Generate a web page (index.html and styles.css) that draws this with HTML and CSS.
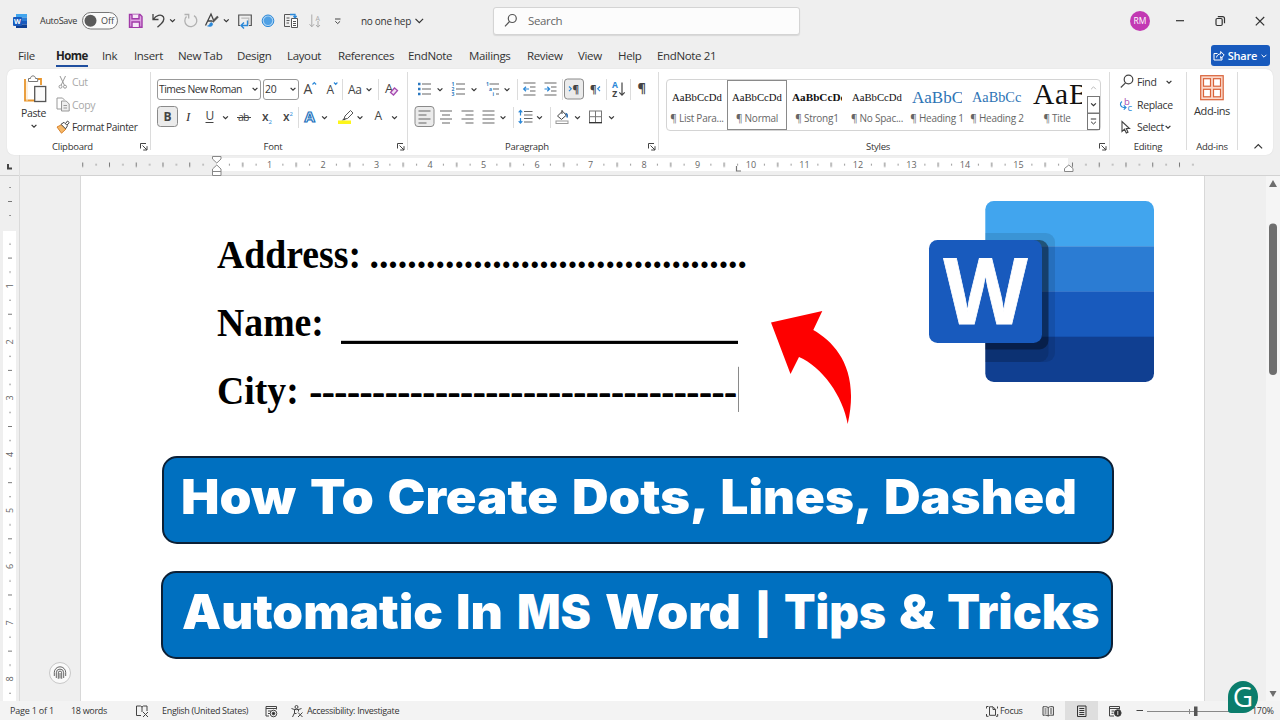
FILE: index.html
```html
<!DOCTYPE html>
<html lang="en">
<head>
<meta charset="utf-8">
<title>no one hep - Word</title>
<link rel="stylesheet" href="styles.css">
</head>
<body>
<svg class="defs" width="0" height="0">
  <defs>
    <path id="chev" d="M-2.4 -1.2L0 1.2L2.4 -1.2" fill="none" stroke="#333" stroke-width="1.2"/>
    <path id="launch" d="M0.5 5.5V0.5H6M2.5 2.5L7 7M7 3.2V7H3.2" fill="none" stroke="#444" stroke-width="1"/>
    <pattern id="ticks" x="216" width="53.5" height="22" patternUnits="userSpaceOnUse">
      <path d="M13.4 9.5v1.5M40.1 9.5v1.5" stroke="#777"/><path d="M26.7 8v4.5" stroke="#777"/>
    </pattern>
    <pattern id="ticksOut" x="214" width="26.75" height="22" patternUnits="userSpaceOnUse">
      <path d="M15.900 9.5v1.5" stroke="#777"/><path d="M2.500 8v4.5" stroke="#777"/>
    </pattern>
    <pattern id="vticks" y="230" width="20" height="56.15" patternUnits="userSpaceOnUse">
      <path d="M9.3 14h1.5M9.3 42.1h1.5M8 28.1h4" stroke="#777"/>
    </pattern>
  </defs>
</svg>

<div class="app">
  <header class="titlebar">
    <svg width="37" height="42" viewBox="0 0 37 42">
      <rect x="16" y="14" width="11" height="3.5" fill="#41a5ee"/><rect x="16" y="17.5" width="11" height="3.5" fill="#2b7cd3"/><rect x="16" y="21" width="11" height="3.5" fill="#185abd"/><rect x="16" y="24.5" width="11" height="3.5" fill="#103f91"/>
      <rect x="13" y="17" width="9" height="9" rx="1" fill="#185abd"/><text x="17.5" y="24.4" class="tiny-w">W</text>
    </svg>
    <span class="autosave">AutoSave</span>
    <svg width="42" height="42" viewBox="80 0 42 42">
      <rect x="82.500" y="12.500" width="35" height="16.500" rx="8.250" fill="#fbfbfb" stroke="#777"/><circle cx="90.500" cy="20.800" r="6" fill="#5b5b5b"/><text x="101" y="24.300" class="off">Off</text>
    </svg>
    <svg width="26" height="42" viewBox="122 0 26 42" fill="none" stroke="#a03aa8" stroke-width="1.400">
      <path d="M129.500 14.500h10.500l2 2v10.800h-12.500z" fill="#dfa5e3"/><path d="M132 14.500v4.300h7v-4.300M132 27v-5h7.500v5" fill="#f6e8f7"/>
    </svg>
    <svg width="32" height="42" viewBox="148 0 32 42" fill="none" stroke="#444" stroke-width="1.300">
      <path d="M153 14v5.500h5.500M153.300 19.300C156 15.500 161 13.500 163.500 17C165.500 21 161 24 157.500 27.300"/><use href="#chev" x="172.500" y="20.500"/>
    </svg>
    <svg width="22" height="42" viewBox="180 0 22 42" fill="none" stroke="#b0b0b0" stroke-width="1.300">
      <path d="M194 15.600A6 6 0 1 1 186.500 16.500M184.500 14.500h4.200v4"/>
    </svg>
    <svg width="30" height="42" viewBox="202 0 30 42" fill="none" stroke="#444" stroke-width="1.300">
      <path d="M205.500 25.500L211 14L213.500 20M208 21h4"/><path d="M218 16.500L212.500 22" stroke="#555" stroke-width="2.200"/><path d="M211.500 22.500c-2 0-1.500 3-4 3.500c2.500 1 5 .5 5.300-2z" fill="#2b88d8" stroke="#2b88d8" stroke-width=".6"/><use href="#chev" x="226.300" y="20.500"/>
    </svg>
    <svg width="26" height="42" viewBox="232 0 26 42" fill="none" stroke="#555" stroke-width="1.200">
      <path d="M240 25.500h-1.300V15h12.600v10.500h-2.500"/><path d="M241.300 18.200h7.500v6" stroke="#bbb"/><path d="M247.500 20.500v5h-6M244 22.500l-3 3l3 3" stroke="#2b88d8" stroke-width="1.400"/>
    </svg>
    <svg width="22" height="42" viewBox="258 0 22 42"><circle cx="268" cy="20.800" r="5.800" fill="#a9d1f3" stroke="#2b88d8"/><circle cx="268" cy="20.800" r="4.200" fill="#4fa0e4"/></svg>
    <svg width="24" height="42" viewBox="280 0 24 42" fill="none" stroke="#555">
      <path d="M290 26.500h-5.500v-12h6M286.500 18h3M286.500 20.500h3M286.500 23h2.500"/><path d="M291.500 18.500h6v9h-6zM293 21.500h3M293 23.500h3M293 25.500h3" fill="#fff"/><path d="M290 14.500h5v3M293.500 16l1.500 1.800l1.700-1.800" stroke="#2b88d8" stroke-width="1.300"/>
    </svg>
    <svg width="24" height="42" viewBox="304 0 24 42" fill="none" stroke="#aaa">
      <path d="M311.800 14.500v12M309.500 24.200l2.300 2.600l2.300-2.600"/><text x="315.500" y="20.500" class="sort-muted">A</text><path d="M318 21v6M316 25l2 2.200l2-2.200"/>
    </svg>
    <svg width="29" height="42" viewBox="328 0 29 42" fill="none" stroke="#444"><path d="M335 19h5.500M335.300 21.300l2.400 2.300l2.400-2.300"/></svg>
    <div class="docname"><span>no one hep</span><svg width="12" height="10" viewBox="413 16 12 10"><path d="M415.500 18.800l3.800 3.800l3.800-3.800" fill="none" stroke="#333" stroke-width="1.200"/></svg></div>
    <div class="search"><svg width="34" height="26" viewBox="494 8 34 26" fill="none" stroke="#555" stroke-width="1.200"><circle cx="512.300" cy="18.500" r="4"/><path d="M509.500 21.500l-4.500 4.800"/></svg><span>Search</span></div>
    <div class="avatar">RM</div>
    <svg width="130" height="42" viewBox="1150 0 130 42" fill="none" stroke="#333" stroke-width="1.200">
      <path d="M1176 20.700h8"/><rect x="1216" y="18.500" width="6.200" height="7" rx="1.200"/><path d="M1217.800 16.600h4.700q2 0 2 2v4.700"/><path d="M1255.800 17l8.400 8.400M1264.200 17l-8.400 8.400"/>
    </svg>
  </header>

  <div class="tabrow">
    <nav class="tabs"><a>File</a><a class="active">Home</a><a>Ink</a><a>Insert</a><a>New Tab</a><a>Design</a><a>Layout</a><a>References</a><a>EndNote</a><a>Mailings</a><a>Review</a><a>View</a><a>Help</a><a>EndNote 21</a></nav>
    <button class="share"><svg width="12" height="14" viewBox="1213 49 12 14" fill="none" stroke="#fff"><path d="M1217.500 53.500h-3.500v6.500h8v-3M1216.500 57.500c.5-2.500 2-3.500 4.200-3.500v-2.500l3.500 3.600l-3.500 3.400v-2.300"/></svg><span>Share</span><svg width="8" height="8" viewBox="-4 -4 8 8"><path d="M-2.400 -1.200L0 1.200L2.400 -1.200" fill="none" stroke="#fff"/></svg></button>
  </div>

  <section class="ribbon">
    <div class="group g-clip">
      <div class="body">
        <div class="paste">
          <svg width="30" height="34" viewBox="20 72 30 34" fill="none"><path d="M26 79v21.500h9.500M42 85v-6h-3" stroke="#e8952c" stroke-width="1.800"/><path d="M28 101v-20" stroke="#fbe1bf"/><path d="M29.500 81.500v-3h2c0-3.500 5-3.500 5 0h2.200v3z" stroke="#777" fill="#fff"/><rect x="35.700" y="86.500" width="11" height="15" stroke="#555" stroke-width="1.300" fill="#fbfbfb"/></svg>
          <span>Paste</span>
          <svg width="8" height="8" viewBox="-4 -4 8 8"><use href="#chev"/></svg>
        </div>
        <div class="stack">
          <div class="cmd muted"><svg width="17" height="20" viewBox="55 72 17 20" fill="none" stroke="#999"><path d="M60 76l4.300 9M65.500 76l-4.300 9"/><circle cx="60.500" cy="86.700" r="1.500"/><circle cx="65" cy="86.700" r="1.500"/></svg><span>Cut</span></div>
          <div class="cmd muted"><svg width="17" height="20" viewBox="55 94.500 17 20" fill="none" stroke="#999"><path d="M61 108.500h-4v-11h5.500l2 2"/><path d="M61.500 100.500h4.700l3 3v7h-7.700zM63.500 105h3.500M63.500 107.500h3.500" fill="#eee"/></svg><span>Copy</span></div>
          <div class="cmd"><svg width="17" height="20" viewBox="55 117 17 20" fill="none"><path d="M57 127l5-2.500l4 4.500l-4.500 4.200z" fill="#f5b868" stroke="#d9822b"/><path d="M61 124.300l3-2l3.500 3.500l-2 3zM65.500 123.500l2-2.500l1.700 1.500l-2 2.500" fill="#fff" stroke="#444"/></svg><span class="fp">Format Painter</span></div>
        </div>
      </div>
      <footer><span>Clipboard</span><svg width="12" height="10" viewBox="0 -1 12 10"><use href="#launch" x="2"/></svg></footer>
    </div>

    <div class="group g-font">
      <div class="body rows">
        <div class="row">
          <div class="combo face"><span>Times New Roman</span><svg width="8" height="8" viewBox="-4 -4 8 8"><use href="#chev"/></svg></div>
          <div class="combo size"><span>20</span><svg width="8" height="8" viewBox="-4 -4 8 8"><use href="#chev"/></svg></div>
          <svg width="22" height="22" viewBox="300 78 22 22"><text x="303.500" y="93.500" class="g14">A</text><path d="M312.500 84.500l1.800-1.800l1.800 1.800" fill="none" stroke="#2b88d8" stroke-width="1.200"/></svg>
          <svg width="20" height="22" viewBox="322 78 20 22"><text x="326.500" y="93.500" class="g12">A</text><path d="M334 82.500l1.700 1.800l1.700-1.800" fill="none" stroke="#2b88d8" stroke-width="1.200"/></svg>
          <i class="sep"></i>
          <svg width="35" height="22" viewBox="343 78 35 22"><text x="348" y="93.500" class="g12" textLength="14">Aa</text><use href="#chev" x="369" y="89.500"/></svg>
          <i class="sep"></i>
          <svg width="24" height="22" viewBox="379 78 24 22" fill="none"><text x="385" y="93" class="g13">A</text><path d="M390.500 92.500l4-4.500l3 2.500l-4 4.500z" stroke="#a64bb0" stroke-width="1.300" fill="#f3e2f5"/></svg>
        </div>
        <div class="row">
          <svg width="23" height="22" viewBox="156 106 23 22"><rect x="157.500" y="106.500" width="20" height="20" rx="3" fill="#ebebeb" stroke="#8a8a8a"/><text x="163.500" y="120.500" class="g12 b">B</text></svg>
          <svg width="20" height="22" viewBox="179 106 20 22"><text x="186" y="121" class="serif-i">I</text></svg>
          <svg width="35" height="22" viewBox="199 106 35 22"><text x="205.500" y="120" class="g12">U</text><path d="M205.500 122.500h8" stroke="#444"/><use href="#chev" x="225.500" y="117.500"/></svg>
          <svg width="22" height="22" viewBox="234 106 22 22"><text x="238" y="120.500" class="g10" textLength="11.500">ab</text><path d="M237 117.500h14" stroke="#444"/></svg>
          <svg width="22" height="22" viewBox="256 106 22 22"><text x="262" y="120.500" class="g12 sb">x</text><text x="268.500" y="123.500" class="sub">2</text></svg>
          <svg width="20" height="22" viewBox="278 106 20 22"><text x="283" y="120.500" class="g12 sb">x</text><text x="289.500" y="115.500" class="sub">2</text></svg>
          <i class="sep"></i>
          <svg width="33" height="22" viewBox="299 106 33 22"><text x="304.500" y="122" class="effect">A</text><use href="#chev" x="324.500" y="117.500"/></svg>
          <svg width="36" height="22" viewBox="332 106 36 22"><path d="M344 119l1-3l5.500-5.500l2.500 2.500l-5.500 5.500z" fill="#fff" stroke="#555"/><path d="M341.500 120.500l2.500-2l2 1.500z" fill="#444"/><rect x="338" y="120.500" width="13" height="3.500" fill="#fdf61a"/><use href="#chev" x="360" y="117.500"/></svg>
          <svg width="34" height="22" viewBox="368 106 34 22"><text x="374.500" y="120" class="g12">A</text><use href="#chev" x="394.500" y="117.500"/></svg>
        </div>
      </div>
      <footer><span>Font</span><svg width="12" height="10" viewBox="0 -1 12 10"><use href="#launch" x="2"/></svg></footer>
    </div>

    <div class="group g-para">
      <div class="body rows">
        <div class="row">
          <svg width="35" height="22" viewBox="413 78 35 22"><path d="M422 84h9M422 89h9M422 94h9" stroke="#666" stroke-width="1.200"/><path d="M418 82.700h2.500v2.500h-2.500zM418 87.700h2.500v2.500h-2.500zM418 92.700h2.500v2.500h-2.500z" fill="#2b78c0"/><use href="#chev" x="440" y="89.500"/></svg>
          <svg width="34" height="22" viewBox="448 78 34 22"><path d="M456 84h9M456 89h9M456 94h9" stroke="#666" stroke-width="1.200"/><text x="451.500" y="85.500" class="num">1</text><text x="451.500" y="90.800" class="num">2</text><text x="451.500" y="96" class="num">3</text><use href="#chev" x="474" y="89.500"/></svg>
          <svg width="35" height="22" viewBox="482 78 35 22"><path d="M489.500 84h9.500M493 89h6M496 94h3" stroke="#666" stroke-width="1.200"/><text x="486" y="85.500" class="num">1</text><text x="489" y="91" class="num">a</text><text x="492.500" y="96" class="num">i</text><use href="#chev" x="507" y="89.500"/></svg>
          <i class="sep"></i>
          <svg width="24" height="22" viewBox="518 78 24 22" fill="none" stroke="#666" stroke-width="1.200"><path d="M523.500 83h12M530 87h5.500M530 91h5.500M523.500 95h12"/><path d="M529 89h-5M526 86.800l-2.300 2.200l2.300 2.200" stroke="#2b88d8"/></svg>
          <svg width="20" height="22" viewBox="542 78 20 22" fill="none" stroke="#666" stroke-width="1.200"><path d="M544.500 83h12M551 87h5.500M551 91h5.500M544.500 95h12"/><path d="M544.500 89h5M547.300 86.800l2.300 2.200l-2.300 2.200" stroke="#2b88d8"/></svg>
          <i class="sep"></i>
          <svg width="22" height="22" viewBox="563 78 22 22"><rect x="564.500" y="79" width="19" height="20" rx="3" fill="#ebebeb" stroke="#8a8a8a"/><path d="M569 86.500l2.300 2.300l-2.300 2.300" fill="none" stroke="#2b88d8" stroke-width="1.200"/><text x="572.500" y="92.500" class="pil">¶</text></svg>
          <svg width="21" height="22" viewBox="585 78 21 22"><text x="590" y="92.500" class="pil">¶</text><path d="M600 86.500l-2.300 2.300l2.300 2.300" fill="none" stroke="#2b88d8" stroke-width="1.200"/></svg>
          <i class="sep"></i>
          <svg width="23" height="22" viewBox="607 78 23 22"><text x="612" y="88" class="az blue">A</text><text x="612.300" y="96.500" class="az">Z</text><path d="M622 82.500v12.500M619.300 92.300l2.700 2.900l2.700-2.900" fill="none" stroke="#444" stroke-width="1.200"/></svg>
          <i class="sep"></i>
          <svg width="22" height="22" viewBox="631 78 22 22"><text x="637.500" y="93.300" class="pil big">¶</text></svg>
        </div>
        <div class="row">
          <svg width="23" height="22" viewBox="413 106 23 22" fill="none" stroke="#666" stroke-width="1.200"><rect x="415" y="106.500" width="19" height="20" rx="3" fill="#ebebeb" stroke="#8a8a8a" stroke-width="1"/><path d="M418.500 111h12M418.500 115h8M418.500 119h12M418.500 123h8"/></svg>
          <svg width="21" height="22" viewBox="436 106 21 22" fill="none" stroke="#666" stroke-width="1.200"><path d="M440 111h12M442 115h8M440 119h12M442 123h8"/></svg>
          <svg width="22" height="22" viewBox="457 106 22 22" fill="none" stroke="#666" stroke-width="1.200"><path d="M461.500 111h12M465.500 115h8M461.500 119h12M465.500 123h8"/></svg>
          <svg width="34" height="22" viewBox="479 106 34 22" fill="none" stroke="#666" stroke-width="1.200"><path d="M482.500 111h12M482.500 115h12M482.500 119h12M482.500 123h12"/><use href="#chev" x="503" y="117.500"/></svg>
          <i class="sep"></i>
          <svg width="36" height="22" viewBox="514 106 36 22" fill="none" stroke="#666" stroke-width="1.200"><path d="M524 111.500h8.500M524 115h8.500M524 118.500h8.500M524 122h8.500"/><path d="M520.500 115.500v-5M518.700 112.300l1.800-2l1.800 2M520.500 118v5M518.700 121.200l1.800 2l1.800-2" stroke="#2b88d8"/><use href="#chev" x="539.500" y="117.500"/></svg>
          <i class="sep"></i>
          <svg width="34" height="22" viewBox="551 106 34 22" fill="none" stroke="#444"><path d="M557.500 116l5-4.800l3.800 4l-4.800 4.200zM562 110v4"/><path d="M565.500 113.500c1.500 0 2 1.500 1.500 4" stroke="#2b6cb0" stroke-width="1.600"/><rect x="556" y="121" width="12" height="2.500" stroke="#999"/><use href="#chev" x="577.500" y="117.500"/></svg>
          <svg width="34" height="22" viewBox="585 106 34 22" fill="none" stroke="#777"><rect x="589.500" y="111" width="12" height="11.500"/><path d="M595.500 111v11.500M589.500 116.700h12"/><path d="M589 122.700h13" stroke="#333" stroke-width="1.300"/><use href="#chev" x="611.500" y="117.500"/></svg>
        </div>
      </div>
      <footer><span>Paragraph</span><svg width="12" height="10" viewBox="0 -1 12 10"><use href="#launch" x="2"/></svg></footer>
    </div>

    <div class="group g-styles">
      <div class="body">
        <div class="gallery">
          <div class="style"><b class="pv">AaBbCcDd</b><span>¶ List Para...</span></div>
          <div class="style sel"><b class="pv">AaBbCcDd</b><span>¶ Normal</span></div>
          <div class="style"><b class="pv strong">AaBbCcDd</b><span>¶ Strong1</span></div>
          <div class="style"><b class="pv">AaBbCcDd</b><span>¶ No Spac...</span></div>
          <div class="style"><b class="pv h1">AaBbCc</b><span>¶ Heading 1</span></div>
          <div class="style"><b class="pv h2">AaBbCc</b><span>¶ Heading 2</span></div>
          <div class="style"><b class="pv title">AaB</b><span>¶ Title</span></div>
          <div class="scroller">
            <svg width="13" height="16" viewBox="-6.500 -8 13 16"><path d="M-2.400 1.200L0 -1.200L2.400 1.200" fill="none" stroke="#bbb"/></svg>
            <svg width="13" height="17" viewBox="-6.500 -8.500 13 17"><rect x="-6" y="-8" width="12" height="16.500" fill="#fff" stroke="#777"/><use href="#chev"/></svg>
            <svg width="13" height="17" viewBox="-6.500 -8.500 13 17"><rect x="-6" y="-8" width="12" height="16" fill="#fff" stroke="#777"/><path d="M-2.700 -2.500h5.400M-2.400 .3L0 2.500L2.400 .3" fill="none" stroke="#333"/></svg>
          </div>
        </div>
      </div>
      <footer><span>Styles</span><svg width="12" height="10" viewBox="0 -1 12 10"><use href="#launch" x="2"/></svg></footer>
    </div>

    <div class="group g-edit">
      <div class="body">
        <div class="stack">
          <div class="cmd"><svg width="20" height="20" viewBox="1117 72 20 20" fill="none" stroke="#444" stroke-width="1.200"><circle cx="1128.500" cy="79.500" r="4.300"/><path d="M1125.500 82.800l-4.700 4.700"/></svg><span>Find</span><svg class="find-ch" width="8" height="8" viewBox="-4 -4 8 8"><use href="#chev"/></svg></div>
          <div class="cmd"><svg width="20" height="20" viewBox="1117 94.500 20 20" fill="none"><text x="1124" y="104" class="rb">b</text><text x="1127.500" y="110.800" class="rc">c</text><path d="M1122 101c-2.500 1.500-2 5.500 1.500 6h2.500M1123.800 104.800l2.200 2.200l-2.200 2.200" stroke="#2b88d8" stroke-width="1.200"/></svg><span>Replace</span></div>
          <div class="cmd"><svg width="20" height="20" viewBox="1117 117 20 20" fill="none" stroke="#444" stroke-width="1.100"><path d="M1122 121.500v10l2.500-2.300l1.800 3.800l1.700-.8l-1.700-3.700h3.200z"/></svg><span>Select</span><svg width="8" height="8" viewBox="-4 -4 8 8"><use href="#chev"/></svg></div>
        </div>
      </div>
      <footer><span>Editing</span></footer>
    </div>

    <div class="group g-add">
      <div class="body addins">
        <svg width="26" height="27" viewBox="1199 74 26 27" fill="#fff" stroke="#d9633a" stroke-width="1.200"><rect x="1200.700" y="75.700" width="22.500" height="24" fill="#fbd9cb"/><rect x="1203.500" y="78.700" width="7" height="7.500"/><rect x="1213.500" y="78.700" width="7" height="7.500"/><rect x="1203.500" y="89.300" width="7" height="7.500"/><rect x="1213.500" y="89.300" width="7" height="7.500"/></svg>
        <span>Add-ins</span>
      </div>
      <footer><span>Add-ins</span></footer>
    </div>
    <div class="collapse"><svg width="12" height="10" viewBox="1252 141 12 10"><path d="M1254.500 148.300l3.800-3.800l3.800 3.800" fill="none" stroke="#333" stroke-width="1.200"/></svg></div>
  </section>

  <svg class="hruler" width="1280" height="21" viewBox="0 155 1280 21">
    <rect x="217" y="158" width="851" height="13" fill="#fff"/>
    <path d="M0 175.500h1280" stroke="#d2d2d2"/><path d="M19.500 155v21" stroke="#e0e0e0"/>
    <path d="M8 164v4.500h4" fill="none" stroke="#444" stroke-width="2"/>
    <g transform="translate(0 154.500)">
      <rect x="80" width="130" height="22" fill="url(#ticksOut)"/><rect x="220" width="842" height="22" fill="url(#ticks)"/><rect x="1071" width="126" height="22" fill="url(#ticksOut)"/>
    </g>
    <g class="rnum">
      <text x="269.500" y="168">1</text><text x="323" y="168">2</text><text x="376.500" y="168">3</text><text x="430" y="168">4</text><text x="483.500" y="168">5</text><text x="537" y="168">6</text><text x="590.500" y="168">7</text><text x="644" y="168">8</text><text x="697.500" y="168">9</text><text x="751" y="168">10</text><text x="804.500" y="168">11</text><text x="858" y="168">12</text><text x="911.500" y="168">13</text><text x="965" y="168">14</text><text x="1018.500" y="168">15</text>
    </g>
    <g fill="#fff" stroke="#888"><path d="M212.500 156.500h8.500v2.500l-4.200 4l-4.300-4z"/><path d="M212.500 175.500v-6.500l4.300-4l4.200 4v6.500zM212.500 171.500h8.500"/><path d="M1064.500 171.500v-3l4.300-3.500l4.200 3.500v3z"/></g>
    <path d="M736.500 166v5h4.500" fill="none" stroke="#777" stroke-width="1.200"/>
  </svg>

  <main class="workspace">
    <svg class="vruler" width="81" height="525" viewBox="0 176 81 525">
      <rect x="3" y="231" width="13" height="470" fill="#fff"/><path d="M19.500 176v525" stroke="#dadada"/><path d="M80.500 176v525" stroke="#d8d8d8"/>
      <path d="M9.300 187.500h1.500M8 201.500h4M9.300 215.500h1.500" stroke="#777"/>
      <rect y="232" width="20" height="469" fill="url(#vticks)"/>
      <g class="rnum"><text transform="translate(13 286) rotate(-90)">1</text><text transform="translate(13 342) rotate(-90)">2</text><text transform="translate(13 398) rotate(-90)">3</text><text transform="translate(13 454.500) rotate(-90)">4</text><text transform="translate(13 510.500) rotate(-90)">5</text><text transform="translate(13 566.500) rotate(-90)">6</text><text transform="translate(13 623) rotate(-90)">7</text><text transform="translate(13 679) rotate(-90)">8</text></g>
      <circle cx="60" cy="673" r="10.500" fill="#fafafa" stroke="#c8c8c8"/>
      <g fill="none" stroke="#555" stroke-width=".9"><path d="M54.300 676v-3.500a5.700 5.700 0 0 1 11.400 0v3.500M56.300 678v-5.200a3.700 3.700 0 0 1 7.400 0v5.200M58.300 678.800v-6a1.700 1.700 0 0 1 3.400 0v6M60 673v5.500"/></g>
    </svg>
    <article class="page">
      <div class="lines">
        <p class="line">Address: <span class="dots">........................................</span></p>
        <p class="line">Name: <span class="rule"></span></p>
        <p class="line">City: <span class="dashes">----------------------------------</span><i class="caret"></i></p>
      </div>
      <div class="banner one"><svg width="944" height="84" viewBox="0 0 944 84"><text y="56"><tspan x="17" textLength="115" lengthAdjust="spacingAndGlyphs">How</tspan> <tspan x="146" textLength="64" lengthAdjust="spacingAndGlyphs">To</tspan> <tspan x="223.500" textLength="170.500" lengthAdjust="spacingAndGlyphs">Create</tspan> <tspan x="408" textLength="134" lengthAdjust="spacingAndGlyphs">Dots,</tspan> <tspan x="556.500" textLength="149" lengthAdjust="spacingAndGlyphs">Lines,</tspan> <tspan x="720" textLength="193" lengthAdjust="spacingAndGlyphs">Dashed</tspan></text></svg></div>
      <div class="banner two"><svg width="944" height="84" viewBox="0 0 944 84"><text y="55.500"><tspan x="19" textLength="261" lengthAdjust="spacingAndGlyphs">Automatic</tspan> <tspan x="293" textLength="47" lengthAdjust="spacingAndGlyphs">In</tspan> <tspan x="354" textLength="74" lengthAdjust="spacingAndGlyphs">MS</tspan> <tspan x="442" textLength="136" lengthAdjust="spacingAndGlyphs">Word</tspan> <tspan x="591" textLength="18" lengthAdjust="spacingAndGlyphs" class="bar">|</tspan> <tspan x="621" textLength="102" lengthAdjust="spacingAndGlyphs">Tips</tspan> <tspan x="736" textLength="36" lengthAdjust="spacingAndGlyphs">&amp;</tspan> <tspan x="784" textLength="152.500" lengthAdjust="spacingAndGlyphs">Tricks</tspan></text></svg></div>
      <svg class="arrow" width="90" height="120" viewBox="765 308 90 120"><path d="M771 322.500L822.300 311L813.300 330C836 343 860 370 847.700 424C843 396 822 367 799 357L790.500 374z" fill="#fe0000"/></svg>
      <svg class="logo" width="230" height="186" viewBox="926 198 230 186">
        <defs><clipPath id="sheet"><rect x="985.300" y="201" width="168.700" height="181" rx="8.500"/></clipPath></defs>
        <g clip-path="url(#sheet)">
          <rect x="985" y="201" width="170" height="45.500" fill="#41a5ee"/><rect x="985" y="246.300" width="170" height="45.500" fill="#2b7cd3"/><rect x="985" y="291.500" width="170" height="45.500" fill="#185abd"/><rect x="985" y="336.700" width="170" height="46" fill="#103f91"/>
          <rect x="965" y="233" width="90" height="129" rx="9" opacity=".1"/><rect x="965" y="240" width="83.500" height="122" rx="9" opacity=".12"/><rect x="965" y="240" width="83.500" height="109.500" rx="9" opacity=".35"/>
        </g>
        <rect x="929" y="240" width="113" height="103" rx="8.500" fill="#185abd"/>
        <text x="943.500" y="324" class="logo-w" textLength="84" lengthAdjust="spacingAndGlyphs">W</text>
      </svg>
    </article>
    <div class="gutter"></div>
    <svg class="scroll" width="14" height="525" viewBox="1266 176 14 525"><rect x="1266" y="176" width="14" height="525" fill="#f5f5f5"/><path d="M1269 187l4-7l4 7zM1269.500 691h7l-3.500 6z" fill="#6e6e6e"/><rect x="1269" y="223.500" width="8" height="151.500" rx="4" fill="#6e6e6e"/></svg>
  </main>

  <footer class="status">
    <span class="s-page">Page 1 of 1</span><span class="s-words">18 words</span>
    <svg width="30" height="19" viewBox="132 701 30 19" fill="none" stroke="#444"><path d="M141 715.500h-4.500v-9.500h4l1.500 1l1.500-1h3.500v5M142 707v5M143 712l5 5M148 712l-5 5"/></svg>
    <span class="s-lang">English (United States)</span>
    <svg width="22" height="19" viewBox="262 701 22 19" fill="none" stroke="#444"><path d="M269 716h-3v-9.500h10.500v3M266 708.500h10.500M268 711h3M268 713.500h2"/><circle cx="273.500" cy="713.500" r="3.300"/><circle cx="273.500" cy="713.500" r="1.300" fill="#222"/></svg>
    <svg width="22" height="19" viewBox="285 701 22 19" fill="none" stroke="#444"><circle cx="297.500" cy="707" r="1.500"/><path d="M292.500 708.500c3 1.500 7 1.500 10 0M295.500 710v3l-2 4M299.500 710v1.500M299 712.500l4.500 4.500M303.500 712.500l-4.500 4.500M295.500 713.500l2 0"/></svg>
    <span class="s-acc">Accessibility: Investigate</span>
    <span class="fill"></span>
    <svg width="16" height="19" viewBox="984 701 16 19" fill="none" stroke="#444"><path d="M986.500 708.500v-2h2M986.500 714v2.300h2M996 716.300h1.700v-2.300M997.500 706.500v2M989.500 706.800h3.500l2.500 2.500v6h-6zM993 707v2.500h2.500"/></svg>
    <span class="s-focus">Focus</span>
    <svg width="31" height="19" viewBox="1034 701 31 19" fill="none" stroke="#444"><path d="M1048.200 707.500v8.500M1048.200 707.500c-1.500-1-3.500-1-5.200-.7v8.500c1.700-.3 3.700-.3 5.200.7c1.500-1 3.500-1 5.200-.7v-8.500c-1.700-.3-3.700-.3-5.200.7M1044.500 709h2M1044.500 711h2M1044.500 713h2M1050 709h2M1050 711h2M1050 713h2"/></svg>
    <svg width="33" height="19" viewBox="1065 701 33 19" fill="none" stroke="#333"><rect x="1065" y="701" width="33" height="19" fill="#dedede" stroke="none"/><path d="M1077.500 706h8.500v10.500h-8.500zM1079.300 708.500h5M1079.300 710.500h5M1079.300 712.500h5M1079.300 714.500h5"/></svg>
    <svg width="32" height="19" viewBox="1098 701 32 19" fill="none" stroke="#444"><path d="M1114 716h-4.500v-9.500h10v3M1109.500 708.500h10M1111.500 711h3M1111.500 713.300h2"/><circle cx="1117.800" cy="713" r="3.300" fill="#333"/><path d="M1117.800 711v4" stroke="#ddd"/></svg>
    <svg width="101" height="19" viewBox="1130 701 101 19"><path d="M1136.500 710.500h6.500" stroke="#444"/><path d="M1147 711.500h84M1189.500 709v5" stroke="#888"/><rect x="1194" y="706.500" width="3.500" height="9.500" fill="#555"/></svg>
    <span class="s-zoom">170%</span>
  </footer>
  <div class="grammar">G</div>
</div>
</body>
</html>
```
FILE: styles.css
```css
* { box-sizing: border-box; }
body { margin: 0; }
svg { display: block; flex: none; }
.defs { position: absolute; }
.app {
  position: relative;
  width: 1280px; height: 720px; overflow: hidden;
  display: flex; flex-direction: column;
  background: #efefef; color: #333;
  font: 11px/14px "Open Sans", "Noto Sans", sans-serif;
  white-space: nowrap;
}

/* title bar */
.titlebar { display: flex; align-items: center; height: 42px; flex: none; }
.autosave { width: 43px; padding-left: 3px; font-size: 9px; letter-spacing: -.3px; }
.off { font-size: 9px; fill: #444; }
.tiny-w { font: bold 7px "Open Sans", sans-serif; fill: #fff; text-anchor: middle; }
.sort-muted { font-size: 7px; fill: #aaa; stroke: none; }
.docname { display: flex; align-items: center; width: 136px; padding-left: 4px; font-size: 10px; letter-spacing: -.3px; }
.docname span { width: 52px; }
.search {
  display: flex; align-items: center; width: 307px; height: 28px;
  background: #fcfcfc; border: 1px solid #d4d4d4; border-radius: 3px;
  box-shadow: 0 1px 1px #d8d8d8; color: #666; font-size: 11.5px; letter-spacing: -.35px;
}
.avatar {
  width: 20px; height: 20px; margin-left: auto; border-radius: 50%;
  background: #c239b3; color: #fff; font-size: 8.5px; line-height: 20px; text-align: center;
}

/* tabs */
.tabrow { display: flex; height: 27px; flex: none; }
.tabs {
  display: grid; padding-left: 18px; width: 1211px;
  grid-template-columns: 38px 46px 32px 44px 59px 50px 51px 70px 61px 58px 51px 40px 39px 70px;
  font-size: 11.5px; letter-spacing: -.35px;
}
.tabs a { height: 25px; line-height: 28px; justify-self: start; }
.tabs .active { font-weight: 700; color: #222; border-bottom: 2px solid #1f4e9e; letter-spacing: -.55px; }
.share {
  display: flex; align-items: center; justify-content: space-between;
  width: 59px; height: 21px; margin-top: 3px; padding: 0 2px;
  border: 0; border-radius: 3px; background: #185abd; color: #fff;
  font: 600 11px/20px "Open Sans", sans-serif; letter-spacing: -.2px;
}

/* ribbon */
.ribbon {
  display: flex; flex: none; height: 86px; margin: 0 7px; padding-top: 3px;
  background: #fff; border-radius: 7px; box-shadow: 0 0 1px #ccc;
}
.group { height: 78px; display: flex; flex-direction: column; border-right: 1px solid #dcdcdc; }
.body { height: 66px; display: flex; flex: none; }
.group footer { display: flex; align-items: center; height: 17px; flex: none; font-size: 9.5px; letter-spacing: -.25px; }
.group footer span { flex: 1; text-align: center; }
.g-clip { width: 144px; }
.g-font { width: 257px; }
.g-para { width: 251px; }
.g-styles { width: 451px; }
.g-edit { width: 77px; }
.g-edit .body { padding-left: 7px; }
.g-add { width: 51px; }
.paste { width: 48px; padding-left: 5px; display: flex; flex-direction: column; align-items: center; font-size: 10.5px; letter-spacing: -.4px; }
.paste span { height: 16px; }
.stack { display: flex; flex-direction: column; gap: 2.5px; font-size: 10.5px; letter-spacing: -.35px; }
.cmd { display: flex; align-items: center; height: 20px; }
.find-ch { margin-left: 8px; }
.muted { color: #a8a8a8; }
.fp { font-size: 10.2px; letter-spacing: -.4px; }
.rows { flex-direction: column; gap: 6px; padding: 6px 0 0 5px; }
.row { display: flex; align-items: center; height: 22px; }
.sep { width: 1px; height: 21px; background: #dcdcdc; }
.combo {
  display: flex; align-items: center; justify-content: space-between;
  height: 21px; padding: 0 1px; border: 1px solid #999; border-radius: 3px;
  font-size: 10.4px; letter-spacing: -.5px;
}
.face { width: 104px; margin: 0 2px 0 1px; }
.size { width: 36px; margin-right: 1px; letter-spacing: -.3px; }
.g10 { font-size: 10.5px; fill: #444; }
.g12 { font-size: 12px; fill: #444; }
.g13 { font-size: 13px; fill: #444; }
.g14 { font-size: 14px; fill: #444; }
.b { font-weight: 700; }
.sb { font-weight: 600; }
.serif-i { font: italic 13px "Liberation Serif", serif; fill: #333; }
.sub { font-size: 6px; fill: #2b88d8; }
.effect { font: bold 15px "Open Sans", sans-serif; fill: #fff; stroke: #2272bd; stroke-width: 1.2px; }
.num { font: 700 5px/5px "Open Sans", sans-serif; fill: #2b78c0; stroke: none; }
.pil { font: bold 10px "Open Sans", sans-serif; fill: #444; }
.big { font-size: 13px; }
.az { font: bold 8.5px "Open Sans", sans-serif; fill: #444; }
.blue { fill: #2b88d8; }
.rb { font-size: 9.5px; fill: #a64bb0; }
.rc { font-size: 9.5px; fill: #2b88d8; }

/* style gallery */
.gallery {
  display: flex; width: 435px; height: 52px; margin: 7px 0 0 7px;
  border: 1px solid #d4d4d4; border-radius: 4px;
}
.style { width: 60px; height: 50px; padding: 0 5px; display: flex; flex-direction: column; overflow: hidden; color: #666; font-size: 10px; letter-spacing: -.25px; }
.style span { align-self: center; line-height: 12px; }
.sel { border: 1.5px solid #8a8a8a; padding: 0 4px; }
.sel .pv { height: 31px; line-height: 33px; }
.pv { height: 32px; overflow: hidden; font: 10.7px/35px "Liberation Serif", serif; color: #111; letter-spacing: 0; }
.strong { font-weight: 700; font-size: 11.2px; }
.h1 { font-size: 17px; color: #2e74b5; }
.h2 { font-size: 14.3px; color: #2e74b5; }
.title { font-size: 29.5px; line-height: 28px; letter-spacing: .8px; padding-left: 1px; }
.scroller { width: 13px; margin-left: auto; }
.addins { flex-direction: column; align-items: center; font-size: 11px; letter-spacing: -.4px; padding-top: 2px; gap: 3px; }
.collapse { display: flex; align-items: flex-end; padding: 0 0 4px 14px; }

/* rulers, page and scroll bar */
.hruler { font-size: 9px; }
.rnum { font: 9px "Open Sans", sans-serif; fill: #666; text-anchor: middle; }
.workspace { display: flex; height: 525px; flex: none; }
.page { position: relative; width: 1123px; background: #fff; padding-left: 80px; }
.gutter { width: 62px; border-left: 1px solid #d8d8d8; }
.lines { padding: 46px 0 0 56px; height: 280px; }
.line {
  display: flex; margin: 0; height: 68px; color: #000; white-space: pre;
  font: bold 37.75px/64px "Liberation Serif", serif;
  transform: scaleY(1.05); transform-origin: 0 50%;
}
.dots { margin-left: -1px; }
.rule { width: 397px; height: 2.8px; margin: 50px 0 0 8px; background: #000; }
.dashes { padding: 1px 0 0 1px; text-shadow: .5px 0 #000; }
.caret { width: 1.5px; height: 43px; margin: 10px 0 0 1px; background: #8a8a8a; }
.banner {
  width: 952px; height: 88px; background: #0070c0;
  border: 2px solid #0c2036; border-radius: 15px;
  font: 900 47.5px "Inter", sans-serif; fill: #fff;
}
.bar { font-size: 40px; }
.one { margin-left: 1px; }
.two { margin-top: 27px; }
.arrow { position: absolute; left: 684px; top: 132px; }
.logo { position: absolute; left: 845px; top: 22px; }
.logo-w { font: 700 91px "Open Sans", sans-serif; fill: #fff; stroke: #fff; stroke-width: .8px; }

/* status bar */
.status { display: flex; align-items: center; height: 19px; background: #f3f3f3; font-size: 9px; letter-spacing: -.32px; }
.s-page { width: 71px; padding-left: 10px; letter-spacing: -.2px; }
.s-words { width: 61px; }
.s-lang { width: 100px; }
.status .s-acc { margin-left: 1px; }
.fill { flex: 1; }
.s-focus { width: 34px; }
.s-zoom { width: 49px; padding-left: 21px; }
.grammar {
  position: absolute; left: 1228px; top: 681px; width: 30px; height: 32px;
  border-radius: 50% 50% 50% 3px; background: #0b7d6c; color: #fff;
  font: 500 28px/31px "Open Sans", sans-serif; text-align: center;
}
```
